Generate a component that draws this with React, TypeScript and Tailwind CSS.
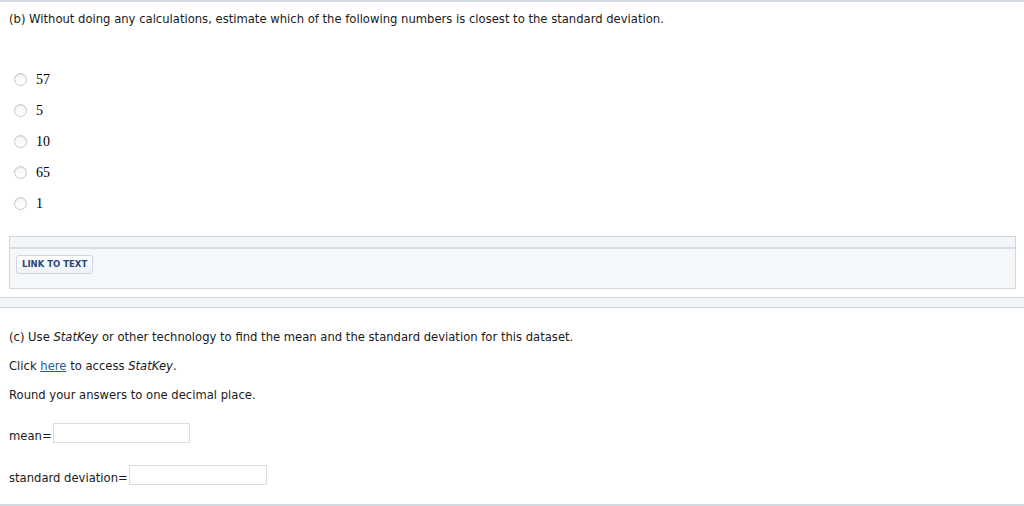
export default function App() {
  const options = ['57', '5', '10', '65', '1'];

  return (
    <div className="w-[1024px] h-[506px] bg-white overflow-hidden text-[11.6px] text-[#1a1a1a] font-['DejaVu_Sans','Verdana',sans-serif]">
      <div className="border-t-2 border-[#d3d9e2]" />

      {/* part b */}
      <div className="pl-[9px] pt-[10px]">
        <p className="leading-[14px]">
          (b) Without doing any calculations, estimate which of the following numbers is closest to the standard deviation.
        </p>
        <div className="pt-[46px] pl-[5px] flex flex-col gap-[17px]">
          {options.map((o) => (
            <label key={o} className="flex items-center h-[14px]">
              <span className="w-[13px] h-[13px] rounded-full border border-[#c8c8c8] bg-gradient-to-b from-[#f7f7f7] to-white shadow-[inset_0_1px_1px_rgba(0,0,0,0.08)]" />
              <span className="ml-[9px] text-[14px] text-black font-['Liberation_Serif',serif]">{o}</span>
            </label>
          ))}
        </div>
      </div>

      {/* link box */}
      <div className="ml-[9px] mr-[8px] mt-[26px] border border-[#d0d7e0] bg-[#f5f8fb]">
        <div className="h-[12px] border-b-2 border-[#d6dde6] bg-[#f3f6f9]" />
        <div className="pl-[6px] pt-[6px] pb-[14px]">
          <button className="h-[19px] px-[5px] rounded-[3px] border border-[#cfd6df] bg-gradient-to-b from-white to-[#eef2f6] text-[8.5px] font-bold text-[#26477a]">
            LINK TO TEXT
          </button>
        </div>
      </div>

      <div className="mt-[8px] h-[11px] border-y border-[#cdd5df] bg-[#f4f7fa]" />

      {/* part c */}
      <div className="pl-[9px] pt-[22px]">
        <p className="leading-[14px]">
          (c) Use <i>StatKey</i> or other technology to find the mean and the standard deviation for this dataset.
        </p>
        <p className="leading-[14px] mt-[15px]">
          Click <a className="text-[#2857a4] underline">here</a> to access <i>StatKey</i>.
        </p>
        <p className="leading-[14px] mt-[15px]">Round your answers to one decimal place.</p>

        <div className="flex items-end mt-[21px]">
          <span className="leading-[14px]">mean=</span>
          <span className="ml-px w-[137px] h-[20px] border border-[#dcdcdc] bg-white" />
        </div>
        <div className="flex items-end mt-[22px]">
          <span className="leading-[14px]">standard deviation=</span>
          <span className="ml-px w-[138px] h-[20px] border border-[#dcdcdc] bg-white" />
        </div>
      </div>

      <div className="mt-[19px] border-t-2 border-[#d3d9e2]" />
    </div>
  );
}
